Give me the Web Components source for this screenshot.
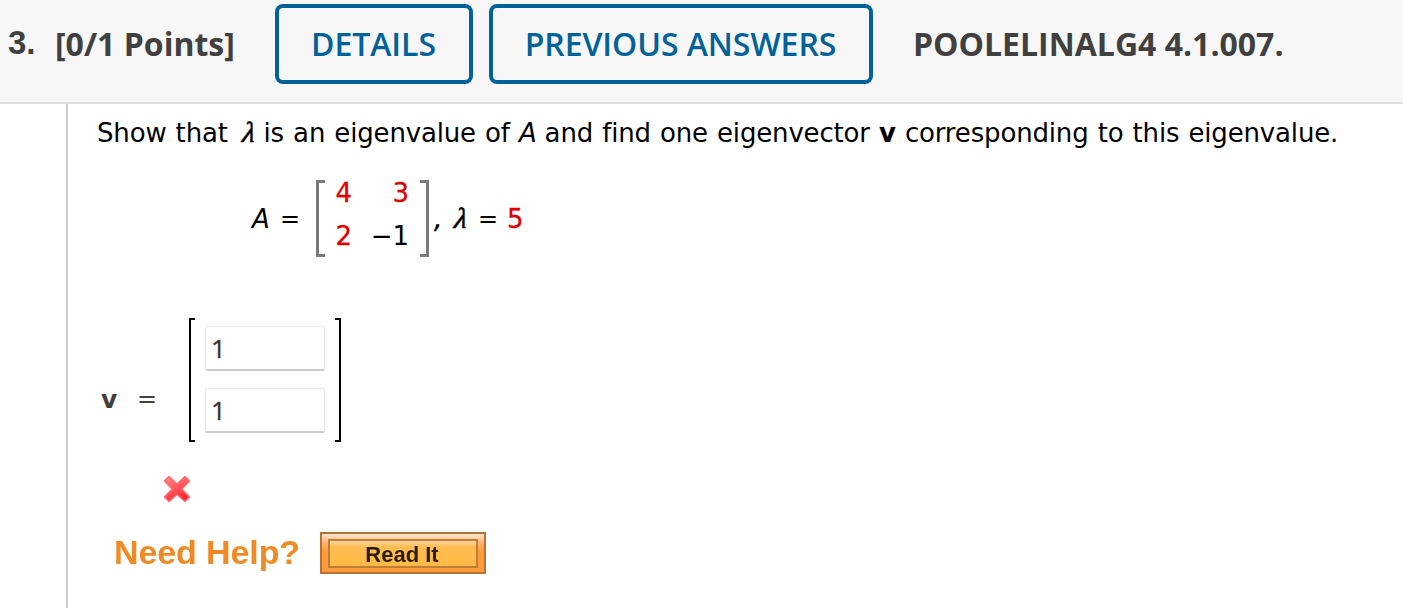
<!DOCTYPE html>
<html lang="en">
<head>
<meta charset="utf-8">
<title>Question 3</title>
<style>
  body {
    margin: 0;
    background: #fff;
    font-family: "DejaVu Sans", Verdana, sans-serif;
    font-size: 26px;
    font-variant-ligatures: none;
    color: #000;
  }
</style>
</head>
<body>
<question-page></question-page>

<script>
// Small helper so every element gets its own open shadow root
function attach(el, html) {
  const template = document.createElement("template");
  template.innerHTML = html;
  const shadow = el.attachShadow({ mode: "open" });
  shadow.appendChild(template.content.cloneNode(true));
  return shadow;
}

class HeaderButton extends HTMLElement {
  constructor() {
    super();
    attach(this, `
      <style>
        :host { display: block; flex: none; }
        button {
          display: block;
          width: 100%;
          height: 80px;
          padding: 0 1px 0 0;
          border: 4px solid #006298;
          border-radius: 8px;
          background: transparent;
          color: #006298;
          font: 600 32px/1 "Open Sans", sans-serif;
          letter-spacing: -0.05px;
          white-space: nowrap;
        }
      </style>
      <button><slot></slot></button>
    `);
  }
}

class QuestionHeader extends HTMLElement {
  constructor() {
    super();
    attach(this, `
      <style>
        :host {
          display: flex;
          align-items: flex-start;
          box-sizing: border-box;
          height: 104px;
          padding: 4px 0 0 8px;
          background: #f7f7f7;
          border-bottom: 2px solid #ddd;
          color: #404040;
          font: bold 32px/80px "Open Sans", sans-serif;
          white-space: nowrap;
        }
        .number {
          width: 47px;
          font-family: "Liberation Sans", sans-serif;
          font-size: 33px;
          line-height: 77px;
        }
        .points { width: 220px; }
        .details { width: 198px; margin-right: 16px; }
        .previous { width: 384px; margin-right: 40px; }
      </style>
      <span class="number">3.</span>
      <span class="points">[0/1 Points]</span>
      <header-button class="details">DETAILS</header-button>
      <header-button class="previous">PREVIOUS ANSWERS</header-button>
      <span class="code">POOLELINALG4 4.1.007.</span>
    `);
  }
}

// Square brackets round whatever is slotted in
class BracketBox extends HTMLElement {
  constructor() {
    super();
    attach(this, `
      <style>
        :host { display: flex; box-sizing: border-box; }
        .side {
          box-sizing: border-box;
          width: var(--arm, 6px);
          border: var(--line, 2px) solid var(--ink, #000);
          filter: var(--soften, none);
        }
        .left { border-right: 0; }
        .right { border-left: 0; }
        .body { flex: 1; }
      </style>
      <div class="side left"></div>
      <div class="body"><slot></slot></div>
      <div class="side right"></div>
    `);
  }
}

// Italic lambda, slanted a bit more than the serif font draws it
class LambdaSign extends HTMLElement {
  constructor() {
    super();
    attach(this, `
      <style>
        :host {
          display: inline-block;
          font-family: "Liberation Serif", serif;
          font-size: 29px;
          font-style: italic;
          line-height: 1;
          letter-spacing: 0;
          transform: translateX(3px) skewX(-9deg);
          -webkit-text-stroke: 0.6px #000;
        }
      </style>λ`);
  }
}

class MatrixEquation extends HTMLElement {
  constructor() {
    super();
    attach(this, `
      <style>
        :host { display: flex; height: 77px; line-height: 79px; white-space: nowrap; }
        .name { width: 28px; padding-left: 1px; }
        .equals { width: 36px; }
        .equals, .eq2 { font-size: 24px; }
        bracket-box { width: 113px; --arm: 9px; --line: 3px; --ink: #7a7a7a; --soften: blur(0.5px); }
        .grid {
          display: grid;
          grid-template-columns: 27px 1fr;
          grid-template-rows: 43px 34px;
          padding: 0 11px 0 0;
          line-height: 27px;
          text-align: right;
        }
        .red { color: #e00000; -webkit-text-stroke: 0.3px #e00000; }
        .comma { width: 18px; padding-left: 5px; -webkit-text-stroke: 0.5px #000; }
        .lambda { width: 26px; }
        .eq2 { width: 29px; }
      </style>
      <i class="name">A</i>
      <span class="equals">=</span>
      <bracket-box>
        <div class="grid">
          <span class="red">4</span><span class="red">3</span>
          <span class="red">2</span><span>−1</span>
        </div>
      </bracket-box>
      <i class="comma">,</i>
      <span class="lambda"><lambda-sign></lambda-sign></span>
      <span class="eq2">=</span>
      <span class="red">5</span>
    `);
  }
}

class AnswerInput extends HTMLElement {
  constructor() {
    super();
    const shadow = attach(this, `
      <style>
        :host { display: block; }
        input {
          display: block;
          box-sizing: border-box;
          width: 120px;
          height: 45px;
          margin: 0;
          padding: 0 5px;
          border: 1px solid #e8e8e8;
          border-bottom: 2px solid #ccc;
          border-radius: 2px;
          background: #fff;
          color: #333;
          font: 26px "Open Sans", sans-serif;
          -webkit-text-stroke: 0.3px #333;
        }
      </style>
      <input type="text">
    `);
    shadow.querySelector("input").value = this.getAttribute("value") || "";
  }
}

class AnswerVector extends HTMLElement {
  constructor() {
    super();
    attach(this, `
      <style>
        :host { display: flex; height: 124px; color: #404040; }
        .name { width: 36px; padding: 67px 0 0 1px; font-weight: bold; font-size: 25px; line-height: 30px; }
        .equals { width: 52px; padding-top: 66px; font-size: 24px; line-height: 30px; }
        bracket-box { width: 152px; }
        .inputs {
          display: flex;
          flex-direction: column;
          gap: 17px;
          padding: 8px 10px;
        }
      </style>
      <span class="name">v</span>
      <span class="equals">=</span>
      <bracket-box>
        <div class="inputs">
          <answer-input value="1"></answer-input>
          <answer-input value="1"></answer-input>
        </div>
      </bracket-box>
    `);
  }
}

class WrongMark extends HTMLElement {
  constructor() {
    super();
    attach(this, `
      <style>
        :host { display: block; width: 28px; height: 28px; }
        svg { display: block; filter: blur(0.7px); }
      </style>
      <svg width="28" height="28" viewBox="0 0 28 28">
        <defs>
          <linearGradient id="red" x1="0" y1="0" x2="0.5" y2="1">
            <stop offset="0" stop-color="#ff8c8c"/>
            <stop offset="0.5" stop-color="#ff5c62"/>
            <stop offset="1" stop-color="#f5292f"/>
          </linearGradient>
        </defs>
        <path fill="url(#red)" stroke="#ff6a70" stroke-width="1.6" stroke-linejoin="round"
          d="M6 1.5 14 9.2 22 1.5 26.5 6 18.8 14 26.5 22 22 26.5 14 19.5 6 26.5 1.5 22 9.2 14 1.5 6Z"/>
      </svg>
    `);
  }
}

class HelpBar extends HTMLElement {
  constructor() {
    super();
    attach(this, `
      <style>
        :host {
          display: flex;
          height: 42px;
          font-family: "Liberation Sans", Arial, sans-serif;
          font-weight: bold;
          white-space: nowrap;
        }
        .label {
          width: 206px;
          color: #f08a24;
          font-size: 34px;
          line-height: 41px;
          letter-spacing: -0.1px;
          filter: blur(0.7px);
        }
        button {
          box-sizing: border-box;
          width: 166px;
          height: 42px;
          padding: 5px 6px 4px;
          border: 2px solid #b87333;
          background: linear-gradient(#ffe8d2, #ffb577 22%, #ff9b3d 45%, #ff9b3a);
          font: inherit;
        }
        .face {
          display: block;
          box-sizing: border-box;
          height: 29px;
          padding-right: 2px;
          border: 2px solid #bd7f36;
          background: linear-gradient(#ffd29a, #ffbd50 25%, #ffb946);
          color: #2a1d08;
          font-size: 22px;
          line-height: 27px;
          filter: blur(0.6px);
        }
      </style>
      <span class="label">Need Help?</span>
      <button><span class="face">Read It</span></button>
    `);
  }
}

class QuestionPage extends HTMLElement {
  constructor() {
    super();
    attach(this, `
      <style>
        :host { display: block; height: 608px; overflow: hidden; }
        main {
          box-sizing: border-box;
          height: 504px;
          margin-left: 66px;
          padding: 13px 0 0 29px;
          border-left: 2px solid #ccc;
        }
        p {
          margin: 0;
          height: 32px;
          line-height: 32px;
          white-space: nowrap;
          letter-spacing: -0.16px;
          word-spacing: 1px;
        }
        p i { margin-right: -1px; }
        p lambda-sign { margin: 0 2px 0 3px; }
        matrix-equation { margin: 31px 0 0 154px; }
        answer-vector { margin: 61px 0 0 3px; }
        wrong-mark { margin: 33px 0 0 66px; }
        help-bar { margin: 29px 0 0 17px; }
      </style>
      <question-header></question-header>
      <main>
        <p>Show that <lambda-sign></lambda-sign> is an eigenvalue of <i>A</i> and find one eigenvector <b>v</b> corresponding to this eigenvalue.</p>
        <matrix-equation></matrix-equation>
        <answer-vector></answer-vector>
        <wrong-mark></wrong-mark>
        <help-bar></help-bar>
      </main>
    `);
  }
}

customElements.define("header-button", HeaderButton);
customElements.define("question-header", QuestionHeader);
customElements.define("bracket-box", BracketBox);
customElements.define("lambda-sign", LambdaSign);
customElements.define("matrix-equation", MatrixEquation);
customElements.define("answer-input", AnswerInput);
customElements.define("answer-vector", AnswerVector);
customElements.define("wrong-mark", WrongMark);
customElements.define("help-bar", HelpBar);
customElements.define("question-page", QuestionPage);
</script>
</body>
</html>
